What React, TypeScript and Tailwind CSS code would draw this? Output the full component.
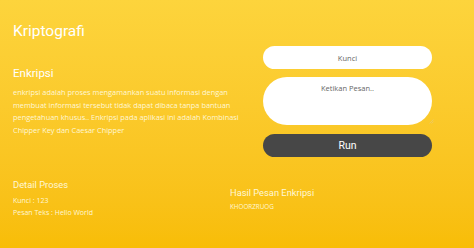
import React from "react";

export default function App() {
  return (
    <div
      className="flex h-[248px] w-[474px] overflow-hidden bg-gradient-to-b from-[#fdd43c] to-[#f8bd06] text-[#fff7d6]"
      style={{ fontFamily: '"Open Sans", "Noto Sans", sans-serif' }}
    >
      <div className="flex w-[229px] shrink-0 flex-col pl-[13px]">
        <h1 className="mt-[20px] font-['Roboto',sans-serif] text-[15.5px] leading-[22px] text-white">Kriptografi</h1>
        <h2 className="mt-[22px] font-['Roboto',sans-serif] text-[11.5px] leading-[18px] text-white">Enkripsi</h2>
        <p className="mt-[4px] w-[236px] text-[7.4px] leading-[12.7px]">
          enkripsi adalah proses mengamankan suatu informasi dengan membuat informasi tersebut tidak dapat dibaca tanpa bantuan
          pengetahuan khusus.. Enkripsi pada aplikasi ini adalah Kombinasi Chipper Key dan Caesar Chipper
        </p>
        <h3 className="mt-[41px] font-['Roboto',sans-serif] text-[9.4px] leading-[14px]">Detail Proses</h3>
        <p className="mt-[3px] text-[7px] leading-[12px]">Kunci : 123</p>
        <p className="text-[7px] leading-[12px]">Pesan Teks : Hello World</p>
      </div>
      <div className="flex flex-1 flex-col">
        <div className="ml-[34px] mt-[46px] flex w-[169px] flex-col gap-[8px]">
          <input
            className="h-[23px] w-full rounded-full bg-white text-center text-[7.5px] text-[#555] outline-none placeholder:text-[#666]"
            placeholder="Kunci"
          />
          <div className="relative">
            <textarea
              className="block h-[48px] w-full resize-none rounded-[24px] bg-white pt-[6px] text-center text-[7.5px] text-[#555] outline-none placeholder:text-[#666]"
              placeholder="Ketikan Pesan.."
            />
            <svg className="absolute -right-[2px] bottom-[1px] h-[5px] w-[5px]" viewBox="0 0 5 5">
              <path d="M0.5 4.5 L4.5 0.5 M2.5 4.5 L4.5 2.5" stroke="#e8c873" strokeWidth="0.7" />
            </svg>
          </div>
          <button className="mt-[1px] h-[23px] w-full rounded-full bg-[#474747] font-['Roboto',sans-serif] text-[10.5px] text-white">
            Run
          </button>
        </div>
        <div className="mt-[29px] flex flex-col pl-[1px]">
          <span className="font-['Roboto',sans-serif] text-[9.3px] leading-[14px]">Hasil Pesan Enkripsi</span>
          <span className="mt-[2px] text-[6.3px] leading-[10px]">KHOORZRUOG</span>
        </div>
      </div>
    </div>
  );
}
